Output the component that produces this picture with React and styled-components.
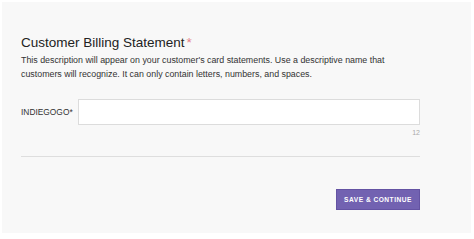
import React from 'react';
import styled, { createGlobalStyle } from 'styled-components';

const GlobalStyle = createGlobalStyle`
  html, body {
    margin: 0;
    padding: 0;
    background: #ffffff;
  }
  body {
    font-family: 'Liberation Sans', Arial, sans-serif;
    color: #2a2a2a;
  }
`;

const Page = styled.div`
  width: 474px;
  height: 239px;
  background: #ffffff;
  padding: 2px 3px 6px 2px;
  box-sizing: border-box;
  display: flex;
`;

const Card = styled.div`
  flex: 1;
  background: #f8f8f8;
  padding: 33px 51px 0 19px;
  display: flex;
  flex-direction: column;
`;

const Title = styled.h2`
  margin: 0;
  font-size: 13.5px;
  font-weight: 400;
  color: #222;
  line-height: 16px;
`;

const Required = styled.span`
  color: #e4828a;
  margin-left: 2px;
`;

const Description = styled.p`
  margin: 2px 0 0;
  font-size: 8.85px;
  line-height: 14px;
  color: #333;
`;

const FieldRow = styled.div`
  margin-top: 18px;
  display: flex;
  align-items: center;
  gap: 5px;
`;

const Label = styled.label`
  font-size: 8.4px;
  color: #333;
  white-space: nowrap;
`;

const Input = styled.input`
  flex: 1;
  height: 26px;
  box-sizing: border-box;
  border: 1px solid #dcdcdc;
  background: #fff;
  outline: none;
  border-radius: 0;
`;

const Counter = styled.div`
  align-self: flex-end;
  margin-top: 4px;
  font-size: 7px;
  color: #aaa;
`;

const Divider = styled.hr`
  margin: 20px 0 0;
  border: none;
  border-top: 1px solid #dedede;
`;

const Actions = styled.div`
  margin-top: 32px;
  display: flex;
  justify-content: flex-end;
`;

const SaveButton = styled.button`
  width: 84px;
  height: 21px;
  box-sizing: border-box;
  background: #7262b1;
  border: 1px solid #6453a3;
  color: #fff;
  font-family: 'Liberation Sans', Arial, sans-serif;
  font-weight: 700;
  font-size: 6.6px;
  letter-spacing: 0.5px;
  padding: 0;
  border-radius: 0;
`;

export default function App() {
  return (
    <>
      <GlobalStyle />
      <Page>
        <Card>
          <Title>
            Customer Billing Statement<Required>*</Required>
          </Title>
          <Description>
            This description will appear on your customer's card statements. Use a descriptive name that
            <br />
            customers will recognize. It can only contain letters, numbers, and spaces.
          </Description>
          <FieldRow>
            <Label>INDIEGOGO*</Label>
            <Input type="text" />
          </FieldRow>
          <Counter>12</Counter>
          <Divider />
          <Actions>
            <SaveButton>SAVE &amp; CONTINUE</SaveButton>
          </Actions>
        </Card>
      </Page>
    </>
  );
}
